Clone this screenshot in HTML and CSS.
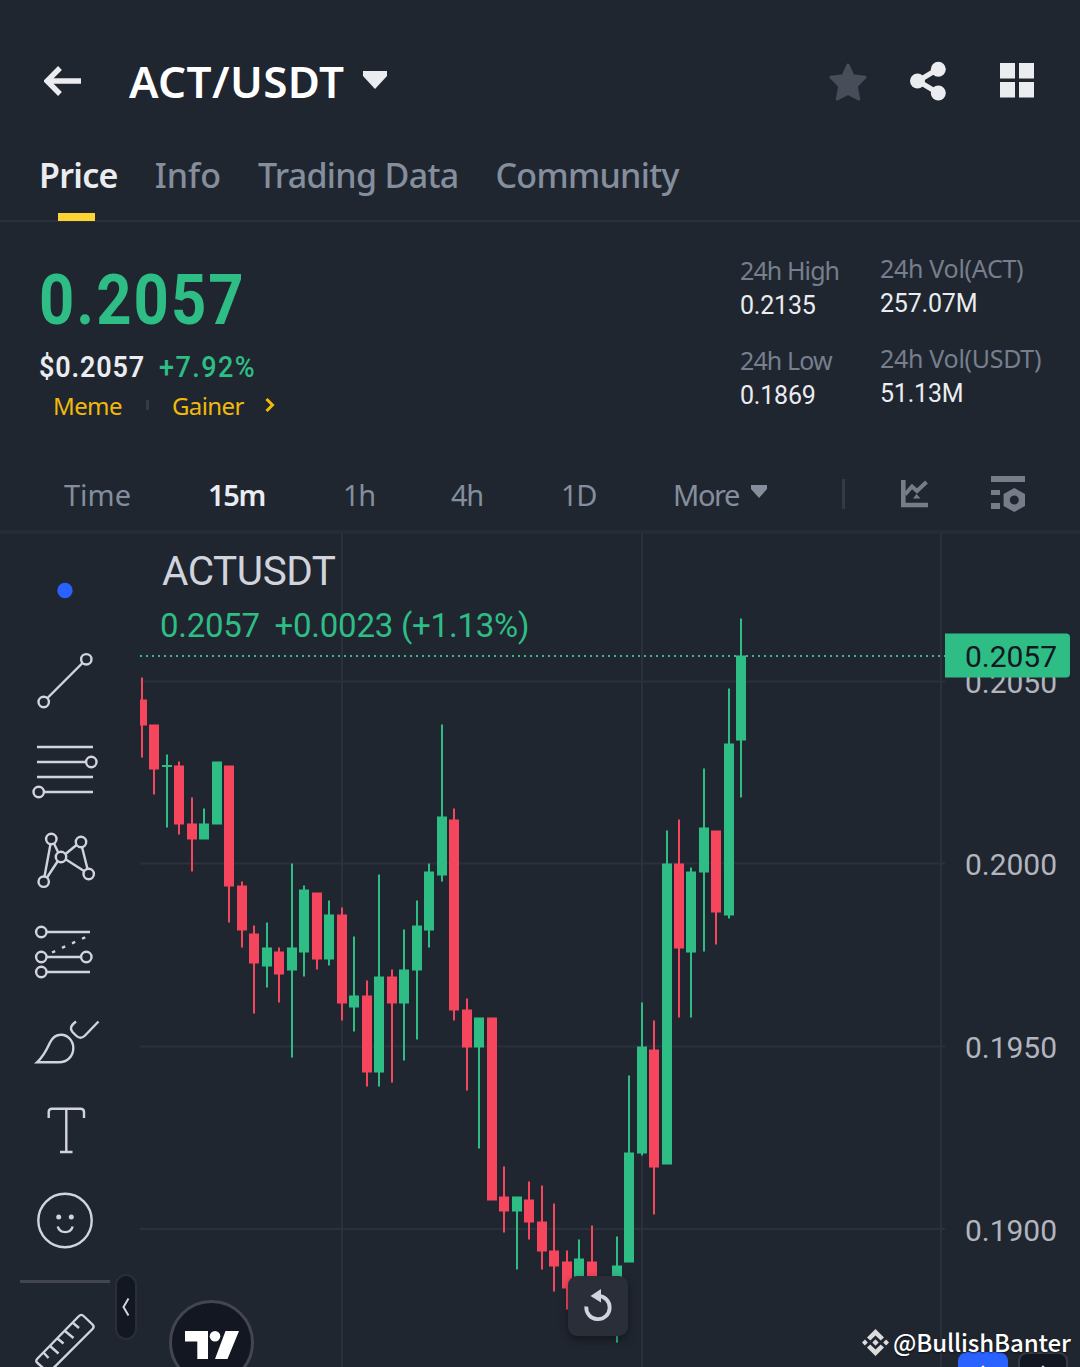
FILE: index.html
```html
<!DOCTYPE html>
<html lang="en">
<head>
<meta charset="utf-8">
<title>ACT/USDT</title>
<link rel="stylesheet" href="styles.css">
</head>
<body>
<div class="app">
  <header class="topbar">
    <svg class="back" width="38" height="30" viewBox="0 0 38 30"><path d="M37 15H4M16 2L3 15L16 28" fill="none" stroke="#eaecef" stroke-width="5.4"/></svg>
    <h1 class="pair">ACT/USDT</h1>
    <svg class="pair-caret" width="24" height="18" viewBox="0 0 24 18"><path d="M0 0H24V5L12 18L0 5Z" fill="#eaecef"/></svg>
    <div class="actions">
      <svg class="star" width="38" height="40" viewBox="0 0 38 40"><path d="M19 3L24 13.8L36 15.3L27.3 24.2L29.7 37L19 31.5L8.300 37L10.700 24.200L2 15.300L14 13.800Z" fill="#474d59" stroke="#474d59" stroke-width="3" stroke-linejoin="round"/></svg>
      <svg width="36" height="40" viewBox="0 0 36 40"><path d="M28 8L8 20L28 32" fill="none" stroke="#eaecef" stroke-width="5"/><g fill="#eaecef"><circle cx="28.300" cy="8.300" r="7.500"/><circle cx="7.500" cy="20" r="7.500"/><circle cx="28.300" cy="32" r="7.500"/></g></svg>
      <svg class="apps" width="34" height="35" viewBox="0 0 34 35"><path d="M0 0H15V15.500H0ZM19 0H34V15.500H19ZM0 19H15V34.500H0ZM19 19H34V34.500H19Z" fill="#eaecef"/></svg>
    </div>
  </header>

  <nav class="tabs">
    <a class="tab tab-active">Price</a>
    <a class="tab tab-info">Info</a>
    <a class="tab tab-data">Trading Data</a>
    <a class="tab tab-comm">Community</a>
  </nav>

  <section class="summary">
    <div class="quote">
      <div class="last">0.2057</div>
      <div class="sub"><span class="usd">$0.2057</span><span class="chg">+7.92%</span></div>
      <div class="tags">
        <span class="tag">Meme</span><i class="tag-sep"></i><span class="tag">Gainer</span>
        <svg width="10" height="14" viewBox="0 0 10 14"><path d="M1.500 1L7.500 7L1.500 13" fill="none" stroke="#f0b90b" stroke-width="3"/></svg>
      </div>
    </div>
    <dl class="stats">
      <div class="stat"><dt>24h High</dt><dd>0.2135</dd></div>
      <div class="stat"><dt>24h Low</dt><dd>0.1869</dd></div>
    </dl>
    <dl class="stats stats-vol">
      <div class="stat"><dt>24h Vol(ACT)</dt><dd>257.07M</dd></div>
      <div class="stat"><dt>24h Vol(USDT)</dt><dd>51.13M</dd></div>
    </dl>
  </section>

  <nav class="intervals">
    <span class="iv iv-time">Time</span>
    <span class="iv iv-15">15m</span>
    <span class="iv iv-1h">1h</span>
    <span class="iv iv-4h">4h</span>
    <span class="iv iv-1d">1D</span>
    <span class="iv iv-more">More</span>
    <svg class="more-caret" width="16" height="13" viewBox="0 0 16 13"><path d="M0 0H16V4L8 13L0 4Z" fill="#848e9c"/></svg>
    <i class="iv-sep"></i>
    <svg class="ic-chart" width="28" height="28" viewBox="0 0 28 28"><g fill="none" stroke="#767c88" stroke-width="4.600"><path d="M2.300 0V25H27"/><path d="M4 14.500L11 6.500L16 11L25.500 2" stroke-width="4"/></g><path d="M12 18.500L15.500 14L19.500 18.500Z" fill="#767c88"/></svg>
    <svg class="ic-set" width="36" height="38" viewBox="0 0 36 38"><path d="M1 1H35V7H1ZM1 15H10V20H1ZM1 28H10V34H1Z" fill="#767c88"/><path fill-rule="evenodd" d="M24.300 13L35 19V31L24.300 37L13.600 31V19ZM24.300 20.500A4.500 4.500 0 1 0 24.300 29.500A4.500 4.500 0 1 0 24.300 20.500Z" fill="#767c88"/></svg>
  </nav>

  <main class="board">
    <aside class="tools">
      <svg viewBox="20 546 90 90"><circle cx="65" cy="590.500" r="7.700" fill="#2962ff"/></svg>
      <svg viewBox="20 636 90 90"><path d="M47.500 698L82.500 663"/><circle cx="86.300" cy="659.300" r="5.200"/><circle cx="43.700" cy="702" r="5.200"/></svg>
      <svg viewBox="20 726 90 90"><path d="M37 747H93M37 762H86M37 777H93M44 792H93"/><circle cx="91.300" cy="762" r="5.200"/><circle cx="38.700" cy="792" r="5.200"/></svg>
      <svg viewBox="20 816 90 90"><path d="M50.500 844L44.500 876.500M54 843.500L58 852M47 877.500L57.500 861.500M65.500 854L76.500 845M66 859.500L84 871M82 847L87.500 869"/><circle cx="51.300" cy="839" r="5.200"/><circle cx="81" cy="842" r="5.200"/><circle cx="61" cy="857" r="5.200"/><circle cx="43.700" cy="881.700" r="5.200"/><circle cx="88.700" cy="874" r="5.200"/></svg>
      <svg viewBox="20 906 90 90"><path d="M47 932H90M47 957H81M47 972H90"/><path d="M52 952.500L88 936" stroke-dasharray="3.500 7.500"/><circle cx="41.300" cy="932" r="5.200"/><circle cx="41.300" cy="957" r="5.200"/><circle cx="86.300" cy="957" r="5.200"/><circle cx="41.300" cy="972" r="5.200"/></svg>
      <svg viewBox="20 996 90 90"><path d="M37 1062.300C44 1056 47 1049 50 1042.500C53 1036.500 57 1034.700 61 1034.700C68 1034.700 73.300 1041 73.300 1048C73.300 1056 67.500 1062.300 59 1062.300ZM76 1021.500C70 1026 70 1029 72.500 1032L76 1035.500C79 1038.500 82 1038.500 85 1035.500L98.500 1021.500"/></svg>
      <svg viewBox="20 1086 90 90"><path d="M48.700 1118V1112Q48.700 1108.700 52 1108.700H80.500Q84 1108.700 84 1112V1118M66.300 1109V1152M60 1152H72.500"/></svg>
      <svg viewBox="20 1176 90 90"><circle cx="65" cy="1220.500" r="26.700"/><path d="M57.700 1226.500C60 1234 70.500 1234 72.700 1226.500"/><g class="dot"><circle cx="58.700" cy="1217" r="2.500"/><circle cx="71.300" cy="1217" r="2.500"/></g></svg>
      <i class="tools-sep"></i>
      <svg viewBox="20 1297 90 90"><path d="M37.500 1358.500L79 1316Q81.300 1313.700 83.600 1316L92.500 1324.500Q94.700 1326.800 92.500 1329L51 1370.500Q48.500 1373 46 1370.500L37.500 1363Q35 1361 37.500 1358.500ZM43.500 1352.500L48.500 1358M50 1346L58.500 1353.500M57.500 1338.500L63.500 1343.500M65 1331L73.500 1338M72.500 1322.500L79 1328"/></svg>
    </aside>

    <div class="plot">
      <svg class="candles" width="940" height="834" viewBox="140 533 940 834">
        <path class="grid" d="M342 533V1367M642 533V1367M941 533V1367M140 681.500H945M140 863.500H945M140 1046.500H945M140 1229H945"/>
        <path class="last-line" d="M140 656H945"/>
        <path class="wick up" d="M167 754.500V827.500M204 808.500V830M267 922.500V987.500M292 863.500V1057.500M304 885.500V976.500M329 900.500V965.500M354 936.500V1031.500M379 874.500V1086.500M404 929.500V1060.500M417 900.500V1039.500M429 863.500V947.500M442 724.500V881.500M479 1020V1148.500M517 1200V1269.500M579 1239.500V1290M617 1236.500V1342.500M629 1075.500V1200M642 1002.500V1155.500M667 830.500V1000M691 867.500V1017.500M704 768.500V951.500M729 688.500V918.500M741 618.500V797.500"/>
        <path class="wick down" d="M142 677.500V757.500M154 730V794.500M179 761.500V834.500M192 797.500V871.500M229 800V922.500M242 881.500V947.500M254 925.500V1013.500M279 947.500V1002.500M317 900V969.500M342 907.500V1020.500M367 980.500V1086.500M392 969.500V1082.500M454 808.500V1020.500M467 998.500V1090.500M504 1166.500V1232.500M529 1181.500V1239.500M542 1185.500V1269.500M554 1203.500V1291.500M567 1250.500V1309.500M592 1225.500V1290M654 1020.500V1214.500M679 819.500V1017.500M716 850V944.500"/>
        <path class="body up" d="M167 765V767M204 823.500V839.500M217 761.500V824.500M267 947.500V966.500M292 947.500V970.500M304 889.500V952.500M329 914.500V959.500M354 995.500V1007.500M379 976.500V1072.500M404 969.500V1003.500M417 925.500V970.500M429 871.500V930.500M442 816.500V875.500M479 1017.500V1047.500M517 1196.500V1211.500M579 1258.500V1290M617 1265.500V1290M629 1152.500V1262.500M642 1046.500V1153.500M667 863.500V1164.500M691 871.500V952.500M704 827.500V872.500M729 743.500V915.500M741 655.500V740.500"/>
        <path class="body down" d="M142 699.500V725.500M154 724.500V769.500M179 765.500V824.500M192 823.500V839.500M229 765.500V886.500M242 885.500V930.500M254 933.500V963.500M279 951.500V974.500M317 892.500V959.500M342 914.500V1003.500M367 995.500V1072.500M392 976.500V1003.500M454 819.500V1010.500M467 1009.500V1047.500M492 1017.500V1200.500M504 1196.500V1211.500M529 1199.500V1222.500M542 1221.500V1251.500M554 1250.500V1266.500M567 1261.500V1288.500M592 1261.500V1290M654 1049.500V1167.500M679 863.500V948.500M716 830.500V912.500"/>
        <text class="symbol" x="162" y="585" textLength="174">ACTUSDT</text>
        <text class="legend" x="160" y="637" textLength="100">0.2057</text>
        <text class="legend" x="274.500" y="637" textLength="255">+0.0023 (+1.13%)</text>
        <g class="axis">
          <text x="965" y="692.500" textLength="92">0.2050</text>
          <text x="965" y="874.500" textLength="92">0.2000</text>
          <text x="965" y="1057.500" textLength="92">0.1950</text>
          <text x="965" y="1240.500" textLength="92">0.1900</text>
        </g>
        <path d="M945 633.500H1066Q1070 633.500 1070 637.500V673.500Q1070 677.500 1066 677.500H945Z" fill="#2ebd85"/>
        <text class="tagtext" x="965" y="666.500" textLength="92">0.2057</text>
      </svg>

      <button class="reset"><svg width="30" height="34" viewBox="0 0 30 34"><path d="M3.300 17.500A11.700 11.700 0 1 0 15 6.800" fill="none" stroke="#d1d4dc" stroke-width="3.800"/><path d="M7.500 7L18 0V13.500Z" fill="#d1d4dc"/></svg></button>
      <div class="tv"><svg width="54" height="28" viewBox="0 0 54 28"><path d="M0 0H23V28H12.300V10.500H0ZM40.500 0H54L42.500 28H30Z" fill="#fff"/><circle cx="30" cy="5.300" r="5.300" fill="#fff"/></svg></div>
      <div class="fab fab-blue"><svg width="16" height="9" viewBox="0 0 16 9"><path d="M2 8L8 2L14 8" fill="none" stroke="#fff" stroke-width="2.500"/></svg></div>
      <div class="fab fab-dark"><svg width="16" height="9" viewBox="0 0 16 9"><path d="M2 8L8 2L14 8" fill="none" stroke="#d1d4dc" stroke-width="2.500"/></svg></div>
    </div>
    <div class="handle"><svg width="8" height="18" viewBox="0 0 8 18"><path d="M6.500 .5L1.500 9L6.500 17.500" fill="none" stroke="#d1d4dc" stroke-width="2"/></svg></div>
    <div class="credit">
      <svg width="27" height="27" viewBox="0 0 27 27"><path d="M13.500 0L22 8.500L18.700 11.600L13.500 6.400L8.300 11.600L5 8.500ZM13.500 27L22 18.500L18.700 15.400L13.500 20.600L8.300 15.400L5 18.500ZM13.500 10.300L16.700 13.500L13.500 16.700L10.300 13.500ZM2.900 10.600L5.800 13.500L2.900 16.400L0 13.500ZM24.100 10.600L27 13.500L24.100 16.400L21.200 13.500Z" fill="#dcdcdc"/></svg>
      <span>@BullishBanter</span>
    </div>
  </main>
</div>
</body>
</html>
```
FILE: styles.css
```css
* { box-sizing: border-box; }
body { margin: 0; background: #202630; }
svg { display: block; flex: none; }
h1, dl, dd { margin: 0; font-weight: inherit; }

.app {
  width: 1080px;
  height: 1367px;
  overflow: hidden;
  display: flex;
  flex-direction: column;
  font-family: "Noto Sans", sans-serif;
  color: #eaecef;
  white-space: nowrap;
}

/* Header */
.topbar { height: 140px; padding: 22px 46px 0 44px; display: flex; align-items: center; flex: none; }
.pair { margin-left: 47px; width: 235px; font-size: 44px; font-weight: 600; line-height: 60px; letter-spacing: .4px; color: #fff; }
.pair-caret { margin-top: -2px; margin-left: -1px; }
.actions { margin-left: auto; display: flex; align-items: center; gap: 54px; }
.actions .star { margin: 1px -11px 0 0; }
.actions .apps { margin-top: -1px; }

/* Page tabs */
.tabs { height: 82px; flex: none; padding-left: 39px; display: flex; gap: 37px; border-bottom: 2px solid #2b313b; }
.tab { font-size: 34px; line-height: 46px; padding-top: 12px; font-weight: 500; letter-spacing: -.7px; color: #848e9c; }
.tab-info { letter-spacing: 0; }
.tab-active { font-weight: 600; color: #eaecef; display: flex; flex-direction: column; align-items: center; height: 81px; }
.tab-active::after { content: ""; width: 37px; height: 8px; margin: 15px 3px 0 0; background: #fcd535; }

/* Price summary */
.summary { height: 232px; flex: none; display: flex; padding-left: 39px; }
.quote { width: 701px; }
.last { margin-top: 37px; height: 82px; width: 240px; font: 700 70px/82px Roboto, sans-serif; letter-spacing: 2.3px; transform: scaleX(.88); transform-origin: left; color: #2ebd85; }
.sub { height: 40px; margin-top: 6px; display: flex; font: 600 30px/40px Roboto, sans-serif; }
.sub span { transform: scaleX(.9); transform-origin: left; }
.usd { width: 120px; letter-spacing: .9px; }
.chg { color: #2ebd85; font-weight: 500; letter-spacing: 1.6px; }
.tags { height: 36px; display: flex; align-items: center; padding-left: 14px; font-size: 24px; letter-spacing: -.6px; color: #f0b90b; }
.tag { width: 93px; }
.tag-sep { width: 3px; height: 10px; margin-right: 23px; background: #343b47; }
.stats { width: 139px; padding-top: 31px; }
.stats-vol { width: 200px; padding: 29px 0 0 1px; }
.stat { height: 90px; }
.stat dt { font-size: 25px; line-height: 34px; letter-spacing: -.9px; color: #767f8d; }
.stats-vol dt { letter-spacing: -.3px; }
.stat dd { font: 400 25px/38px Roboto, sans-serif; letter-spacing: -.2px; }

/* Interval bar */
.intervals { height: 80px; flex: none; display: flex; align-items: center; padding-top: 4px; border-bottom: 4px solid #262c36; font-size: 29px; line-height: 40px; color: #848e9c; }
.iv { margin-top: 2px; letter-spacing: -1.4px; }
.iv-time { width: 144px; margin-left: 64px; letter-spacing: 0; }
.iv-15 { width: 135px; color: #eaecef; font-weight: 600; }
.iv-1h { width: 108px; }
.iv-4h { width: 110px; }
.iv-1d { width: 112px; }
.iv-more { width: 78px; }
.more-caret { margin-top: -5px; }
.iv-sep { width: 3px; height: 30px; margin-left: 75px; background: #333a45; }
.ic-chart { margin-left: 56px; }
.ic-set { margin-left: 61px; }

/* Chart board */
.board { position: relative; display: flex; flex: 1; min-height: 0; }
.tools { width: 140px; padding: 12px 0 0 20px; display: flex; flex-direction: column; }
.tools svg { width: 90px; height: 90px; fill: none; stroke: #d1d4dc; stroke-width: 2.4; }
.tools svg:first-child { stroke: none; }
.tools .dot { fill: #d1d4dc; stroke: none; }
.tools-sep { width: 90px; height: 3px; margin: 14px 0; background: #434651; flex: none; }
.plot { position: relative; width: 940px; }
.candles { margin-top: -1px; font-family: Roboto, sans-serif; }
.grid { stroke: #2b313c; stroke-width: 2; }
.last-line { stroke: #2ebd85; stroke-width: 2; stroke-dasharray: 2 4; }
.wick { stroke-width: 2; }
.body { stroke-width: 10; }
.up { stroke: #2ebd85; }
.down { stroke: #f6465d; }
.symbol { font-size: 40.5px; fill: #d1d4dc; }
.legend { font-size: 33px; fill: #2ebd85; }
.axis { font-size: 30px; fill: #b2b5be; }
.tagtext { font-size: 30px; fill: #131722; }

.reset { position: absolute; left: 428px; top: 742px; width: 60px; height: 60px; padding: 0; border: 0; border-radius: 9px; background: #2a2e39; box-shadow: 0 4px 10px rgba(0, 0, 0, .4); display: flex; align-items: center; justify-content: center; }
.tv { position: absolute; left: 29px; top: 766px; width: 85px; height: 85px; border: 3px solid #434651; border-radius: 50%; background: #131722; display: flex; justify-content: center; padding-top: 28px; }
.fab { position: absolute; top: 818px; width: 50px; height: 50px; border-radius: 9px; display: flex; justify-content: center; padding-top: 13px; }
.fab-blue { left: 818px; background: #2962ff; }
.fab-dark { left: 878px; background: #131722; border: 2px solid #363a45; padding-top: 11px; }
.handle { position: absolute; left: 115px; top: 740px; width: 22px; height: 66px; border: 2px solid #2a2e39; border-radius: 11px; background: #131722; display: flex; align-items: center; justify-content: center; }
.credit { position: absolute; left: 862px; top: 790px; display: flex; align-items: center; gap: 4px; font: 500 24px/36px "Noto Sans CJK SC", sans-serif; letter-spacing: -.1px; color: #fff; text-shadow: 0 1px 2px rgba(0, 0, 0, .6); }
```
